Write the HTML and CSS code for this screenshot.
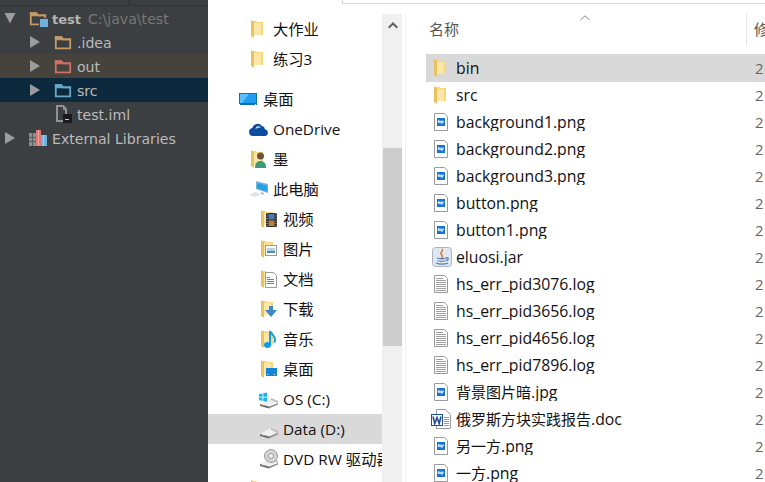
FILE: index.html
```html
<!DOCTYPE html>
<html lang="zh">
<head>
<meta charset="utf-8">
<title>test</title>
<link rel="stylesheet" href="styles.css">
</head>
<body>
<svg class="sprite" xmlns="http://www.w3.org/2000/svg">
  <symbol id="tri-r" viewBox="0 0 12 12"><path d="M1 0 11 6 1 12z"/></symbol>
  <symbol id="tri-d" viewBox="0 0 12 12"><path d="M0.500 1h11L6 11.500z"/></symbol>
  <symbol id="idea-folder" viewBox="0 0 20 16"><path fill="none" stroke="currentColor" stroke-width="2" d="M2 14.500V2h6l2 2.500h8v10z"/><path fill="currentColor" d="M2 1h6.500l2 2.500h8.500v2H1V1z"/></symbol>
  <symbol id="iml" viewBox="0 0 18 20"><path fill="none" stroke="#8f9192" stroke-width="2" d="M8 17H2V2h6l3 3v5"/><path fill="#8f9192" d="M8 1v5h4z"/><rect x="8" y="10" width="9" height="9" fill="#1b1b1b"/><rect x="10" y="15" width="4" height="1" fill="#c8c8c8"/></symbol>
  <symbol id="libs" viewBox="0 0 18 16"><rect x="0" y="3" width="7" height="13" fill="#8a8d8f"/><path d="M0 7.500h7M0 11.500h7M3.500 3v13" stroke="#5b5e60"/><rect x="7" y="0" width="5" height="16" fill="#e0736e"/><rect x="9" y="0" width="1" height="16" fill="#efa9a5"/><rect x="12" y="5" width="6" height="11" fill="#6fb0dc"/><rect x="14" y="5" width="1" height="11" fill="#a9d2ee"/></symbol>

  <symbol id="folder" viewBox="0 0 20 20"><path fill="#f7d67c" d="M2 2h5l1 1h6v13H2z"/><path fill="#fce7a9" d="M5 4h7v12H5z"/><path fill="#ecc164" d="M2 1l3 2v16l-3-2z"/></symbol>
  <symbol id="desktop" viewBox="0 0 20 20"><rect x="0" y="4" width="18" height="12" fill="#0f6fb8"/><path fill="#1f9df2" d="M1 5h16v9H1z"/><path fill="#5cc0fa" d="M1 5h9L3 14H1z"/><path fill="#fff" d="M0 15h1v1H0zM16 15h1v1h-1z"/></symbol>
  <symbol id="cloud" viewBox="0 0 20 20"><path fill="#0c4da2" d="M4 17a4 4 0 0 1-.8-7.900A5.500 5.500 0 0 1 13 7a3.800 3.800 0 0 1 3 3.200A3.500 3.500 0 0 1 16.500 17z"/><path fill="#fff" d="M6.500 9.500c1-2 3-3 5-1.500l-.5.700c-1.500-.5-3 0-4 1.300z"/></symbol>
  <symbol id="person" viewBox="0 0 20 20"><use href="#folder"/><circle cx="11.500" cy="7" r="3.500" fill="#6e5240"/><path fill="#3f9a78" d="M6 19c0-5 2-7 5.500-7s5.500 2 5.500 7z"/></symbol>
  <symbol id="pc" viewBox="0 0 20 20"><path fill="#dfe3e6" d="M0 16l6-3 6 2-6 3z"/><path fill="#7ab6dc" d="M7 2l12 3v9L7 10z"/><path fill="#28a0e6" d="M8 4l10 2.500v6L8 9.500z"/><path fill="#b9c0c6" d="M12 13l3 .8v2l-3-.8z"/></symbol>
  <symbol id="video" viewBox="0 0 20 20"><use href="#folder"/><rect x="7" y="4" width="11" height="14" fill="#2c2c2c"/><rect x="9.500" y="5" width="6" height="5.500" fill="#4a7cb8"/><rect x="9.500" y="11.500" width="6" height="5.500" fill="#b9803a"/><path stroke="#ccc" stroke-dasharray="1 1.500" d="M8 4v14M17 4v14"/></symbol>
  <symbol id="pic" viewBox="0 0 20 20"><use href="#folder"/><rect x="6.500" y="6.500" width="11" height="10" fill="#fff" stroke="#9b9b9b"/><rect x="8" y="9" width="8" height="5" fill="#b9d3e6"/><rect x="8" y="12" width="8" height="2" fill="#4b8e90"/></symbol>
  <symbol id="docs" viewBox="0 0 20 20"><use href="#folder"/><path fill="#fff" stroke="#9b9b9b" d="M6.500 3.500h8l3 3v12h-11z"/><path stroke="#2f8fd8" d="M8 8.500h3M8 10.500h7M8 12.500h7M8 14.500h7"/></symbol>
  <symbol id="down" viewBox="0 0 20 20"><use href="#folder"/><path fill="#3a87d0" d="M10 7h4v4h4l-6 7-6-7h4z"/></symbol>
  <symbol id="music" viewBox="0 0 20 20"><use href="#folder"/><path fill="none" stroke="#109be6" stroke-width="2" d="M11 16V2c1 3 5 4 5 9 0 1-.5 2-1 2.500"/><ellipse cx="8.500" cy="16" rx="3.500" ry="3" fill="#109be6"/></symbol>
  <symbol id="desk2" viewBox="0 0 20 20"><use href="#folder"/><rect x="7" y="9" width="11" height="8" fill="#1785d8"/><path fill="#fff" d="M8 15h1v1H8zM15 15h1v1h-1z"/></symbol>
  <symbol id="drive" viewBox="0 0 20 20"><path fill="#f0f0f0" d="M1 15l11-6 7 3-9 5z"/><path fill="#bdbdbd" d="M12 9l7 3v2l-7-3z"/><path fill="#6a6a6a" d="M1 15l9 2.500v2L1 17z"/><path fill="#8f8f8f" d="M10 17.500l9-3.500v1.500l-9 4z"/><path fill="#3fbf5f" d="M3 16h2v1H3z"/></symbol>
  <symbol id="drive-os" viewBox="0 0 20 20"><use href="#drive"/><path fill="#18b4ec" d="M0 5l3.500-.6v3.300H0zM4.300 4.200L8 3.500v4.200H4.300zM0 8.500h3.500v3.300L0 11.200zM4.300 8.500H8v4.200l-3.700-.7z"/></symbol>
  <symbol id="dvd" viewBox="0 0 20 20"><use href="#drive"/><circle cx="12" cy="7" r="6.500" fill="#d4d4d4" stroke="#9a9a9a"/><circle cx="12" cy="7" r="2.500" fill="#f4f4f4" stroke="#9a9a9a"/></symbol>

  <symbol id="png" viewBox="0 0 20 20"><path fill="#fff" stroke="#9a9a9a" d="M2.500 1.500h10l3 3v14h-13z"/><rect x="5" y="6" width="8" height="8" fill="#1473d4"/><path fill="#cfe6fa" d="M5.500 9.500l1.500-2 1 2 1-1.500 1 1.500 1-1.500 1 2-1 .5-1 2-1-2-1 1-1-1-1 .5z"/></symbol>
  <symbol id="log" viewBox="0 0 20 20"><path fill="#fff" stroke="#9a9a9a" d="M2.500 1.500h10l3 3v14h-13z"/><path stroke="#a0a0a0" d="M4 4.500h7M4 6.500h10M4 8.500h10M4 10.500h10M4 12.500h10M4 14.500h10M4 16.500h10"/></symbol>
  <symbol id="jar" viewBox="0 0 20 20"><rect x="0.500" y="0.500" width="19" height="19" rx="3" fill="#dfe8f2" stroke="#a9b4c0"/><path fill="none" stroke="#e0742a" stroke-width="1.500" d="M10 2c2 2-2 3-1 5s2 1.500 1 4"/><path fill="none" stroke="#5b7fa8" stroke-width="1.300" d="M5 11c2 1 7 1 9 0M5.500 13.500c2 1 6 1 8 0M4 16c3 1.500 9 1.500 12 0M14 11c3-1 3 2 0 2.500"/></symbol>
  <symbol id="doc" viewBox="0 0 22 22"><path fill="#fff" stroke="#9a9a9a" d="M6.500 1.500h9l5 5v14h-14z"/><path stroke="#9a9a9a" d="M14 9.500h5M14 11.500h5M14 13.500h5M14 15.500h5M14 17.500h5"/><rect x="1" y="6" width="12" height="12" fill="#1f4e96"/><rect x="2" y="7" width="10" height="10" fill="#fff"/><path fill="none" stroke="#1f4e96" stroke-width="1.600" d="M3 8.500l1.800 7 2.200-6 2.200 6 1.800-7"/></symbol>
  <symbol id="caret" viewBox="0 0 10 6"><path fill="none" stroke="#8a8a8a" d="M.5 5 5 .8 9.500 5"/></symbol>
  <symbol id="chev" viewBox="0 0 10 7"><path fill="none" stroke="#606060" stroke-width="2" d="M.7 5.800 5 1.500l4.300 4.300"/></symbol>
</svg>

<aside class="ide">
  <div class="ide-top"><span class="ide-tab"></span></div>
  <div class="tree-row">
    <svg class="tri tri-root"><use href="#tri-d"/></svg>
    <span class="project-icon"><svg class="tree-folder tan"><use href="#idea-folder"/></svg><span class="project-badge"></span></span>
    <span class="tree-label"><b>test</b><span class="path">C:\java\test</span></span>
  </div>
  <div class="tree-row">
    <svg class="tri tri-child"><use href="#tri-r"/></svg>
    <svg class="tree-folder tan"><use href="#idea-folder"/></svg>
    <span class="tree-label">.idea</span>
  </div>
  <div class="tree-row tree-out">
    <svg class="tri tri-child"><use href="#tri-r"/></svg>
    <svg class="tree-folder red"><use href="#idea-folder"/></svg>
    <span class="tree-label">out</span>
  </div>
  <div class="tree-row tree-sel">
    <svg class="tri tri-child"><use href="#tri-r"/></svg>
    <svg class="tree-folder blue"><use href="#idea-folder"/></svg>
    <span class="tree-label">src</span>
  </div>
  <div class="tree-row tree-leaf">
    <svg class="iml-icon"><use href="#iml"/></svg>
    <span class="tree-label">test.iml</span>
  </div>
  <div class="tree-row">
    <svg class="tri tri-ext"><use href="#tri-r"/></svg>
    <svg class="libs-icon"><use href="#libs"/></svg>
    <span class="tree-label">External Libraries</span>
  </div>
</aside>

<div class="explorer">
  <div class="topbar"><div class="addr"></div></div>
  <div class="panes">
    <nav class="nav">
      <div class="nav-row l1"><svg class="ico"><use href="#folder"/></svg>大作业</div>
      <div class="nav-row l1"><svg class="ico"><use href="#folder"/></svg>练习3</div>
      <div class="nav-gap"></div>
      <div class="nav-row l0"><svg class="ico"><use href="#desktop"/></svg>桌面</div>
      <div class="nav-row l1"><svg class="ico"><use href="#cloud"/></svg>OneDrive</div>
      <div class="nav-row l1"><svg class="ico"><use href="#person"/></svg>墨</div>
      <div class="nav-row l1"><svg class="ico"><use href="#pc"/></svg>此电脑</div>
      <div class="nav-row l2"><svg class="ico"><use href="#video"/></svg>视频</div>
      <div class="nav-row l2"><svg class="ico"><use href="#pic"/></svg>图片</div>
      <div class="nav-row l2"><svg class="ico"><use href="#docs"/></svg>文档</div>
      <div class="nav-row l2"><svg class="ico"><use href="#down"/></svg>下载</div>
      <div class="nav-row l2"><svg class="ico"><use href="#music"/></svg>音乐</div>
      <div class="nav-row l2"><svg class="ico"><use href="#desk2"/></svg>桌面</div>
      <div class="nav-row l2"><svg class="ico"><use href="#drive-os"/></svg>OS (C:)</div>
      <div class="nav-row l2 nav-sel"><svg class="ico"><use href="#drive"/></svg>Data (D:)</div>
      <div class="nav-row l2"><svg class="ico"><use href="#dvd"/></svg>DVD RW 驱动器</div>
      <div class="nav-row l1"><svg class="ico"><use href="#folder"/></svg></div>
    </nav>
    <div class="scrollbar">
      <div class="scroll-up"><svg class="chev"><use href="#chev"/></svg></div>
      <div class="scroll-thumb"></div>
    </div>
    <main class="files">
      <div class="file-head">
        <span class="col-name">名称<svg class="caret"><use href="#caret"/></svg></span>
        <span class="col-date">修改日期</span>
      </div>
      <div class="file-row file-sel"><svg class="ico"><use href="#folder"/></svg><span class="fname">bin</span><span class="fdate">2017/5/2</span></div>
      <div class="file-row"><svg class="ico"><use href="#folder"/></svg><span class="fname">src</span><span class="fdate">2017/5/2</span></div>
      <div class="file-row"><svg class="ico"><use href="#png"/></svg><span class="fname">background1.png</span><span class="fdate">2017/5/2</span></div>
      <div class="file-row"><svg class="ico"><use href="#png"/></svg><span class="fname">background2.png</span><span class="fdate">2017/5/2</span></div>
      <div class="file-row"><svg class="ico"><use href="#png"/></svg><span class="fname">background3.png</span><span class="fdate">2017/5/2</span></div>
      <div class="file-row"><svg class="ico"><use href="#png"/></svg><span class="fname">button.png</span><span class="fdate">2017/5/2</span></div>
      <div class="file-row"><svg class="ico"><use href="#png"/></svg><span class="fname">button1.png</span><span class="fdate">2017/5/2</span></div>
      <div class="file-row"><svg class="ico"><use href="#jar"/></svg><span class="fname">eluosi.jar</span><span class="fdate">2017/5/2</span></div>
      <div class="file-row"><svg class="ico"><use href="#log"/></svg><span class="fname">hs_err_pid3076.log</span><span class="fdate">2017/5/2</span></div>
      <div class="file-row"><svg class="ico"><use href="#log"/></svg><span class="fname">hs_err_pid3656.log</span><span class="fdate">2017/5/2</span></div>
      <div class="file-row"><svg class="ico"><use href="#log"/></svg><span class="fname">hs_err_pid4656.log</span><span class="fdate">2017/5/2</span></div>
      <div class="file-row"><svg class="ico"><use href="#log"/></svg><span class="fname">hs_err_pid7896.log</span><span class="fdate">2017/5/2</span></div>
      <div class="file-row"><svg class="ico"><use href="#png"/></svg><span class="fname"><span class="cjk">背景图片暗</span>.jpg</span><span class="fdate">2017/5/2</span></div>
      <div class="file-row"><svg class="ico ico-doc"><use href="#doc"/></svg><span class="fname"><span class="cjk">俄罗斯方块实践报告</span>.doc</span><span class="fdate">2017/5/2</span></div>
      <div class="file-row"><svg class="ico"><use href="#png"/></svg><span class="fname"><span class="cjk">另一方</span>.png</span><span class="fdate">2017/5/2</span></div>
      <div class="file-row"><svg class="ico"><use href="#png"/></svg><span class="fname"><span class="cjk">一方</span>.png</span><span class="fdate">2017/5/2</span></div>
    </main>
  </div>
</div>
</body>
</html>
```
FILE: styles.css
```css
* { box-sizing: border-box; }
html, body { margin: 0; height: 100%; }
body {
  display: flex;
  width: 765px;
  height: 482px;
  overflow: hidden;
  background: #fff;
}
.sprite { display: none; }

/* IDE project tree */
.ide {
  flex: 0 0 208px;
  background: #3c3f41;
  color: #bbbbbb;
  font: 14.1px/24px "DejaVu Sans", sans-serif;
}
.ide-top {
  height: 6px;
  background: #3c3f41;
  border-bottom: 1px solid #323437;
}
.ide-tab {
  display: block;
  width: 130px;
  height: 5px;
  border-right: 1px solid #2b2d2e;
}
.tree-row {
  display: flex;
  align-items: center;
  height: 24px;
  white-space: nowrap;
}
.tree-out { background: #45433c; }
.tree-sel { background: #0d293e; }
.tree-leaf { padding-left: 55px; }
.tree-label { padding-top: 2px; }
.tree-label b { font-size: 13px; font-weight: 700; color: #b4b4b4; }
.path { margin-left: 7px; color: #787878; }
.tri { fill: #9a9c9e; width: 12px; height: 12px; flex: none; }
.tri-root { margin: 0 13px 0 4px; }
.tri-child { margin: 0 13px 0 29px; }
.tri-ext { margin: 0 13px 0 4px; }
.tree-folder { width: 18px; height: 15px; flex: none; margin-right: 5px; }
.tan { color: #c59a66; }
.red { color: #cf6f69; }
.blue { color: #66a7cc; }
.project-icon { display: flex; position: relative; width: 19px; margin-right: 4px; }
.project-badge {
  position: absolute;
  right: 0;
  bottom: -1px;
  width: 8px;
  height: 8px;
  background: #6fb0dc;
  outline: 1px solid #3c3f41;
}
.project-icon .tree-folder { margin-right: 0; }
.iml-icon { width: 18px; height: 20px; flex: none; margin-right: 4px; }
.libs-icon { width: 18px; height: 16px; flex: none; margin-right: 5px; }

/* Explorer window */
.explorer {
  flex: 1;
  min-width: 0;
  display: flex;
  flex-direction: column;
  font: 15px/1.2 "Open Sans", "Noto Sans CJK SC", sans-serif;
  color: #111;
}
.topbar { flex: 0 0 14px; padding-left: 134px; }
.addr {
  height: 4px;
  border-left: 1px solid #d9d9d9;
  border-bottom: 1px solid #d9d9d9;
}
.panes { flex: 1; display: flex; min-height: 0; }

.nav { flex: 0 0 174px; overflow: hidden; font-size: 15.3px; }
.nav-row {
  display: flex;
  align-items: center;
  height: 30px;
  white-space: nowrap;
}
.nav-gap { height: 10px; }
.l0 { padding-left: 31px; }
.l1 { padding-left: 41px; }
.l2 { padding-left: 51px; }
.nav-sel { background: #d9d9d9; }
.ico { width: 20px; height: 20px; flex: none; margin-right: 4px; }

.scrollbar {
  flex: 0 0 20px;
  margin-right: 3px;
  background: #f0f0f0;
  display: flex;
  flex-direction: column;
}
.scroll-up {
  height: 134px;
  display: flex;
  justify-content: center;
  padding-top: 8px;
  padding-left: 1px;
}
.chev { width: 10px; height: 7px; }
.scroll-thumb { height: 198px; margin-left: 1px; background: #cdcdcd; }

.files {
  flex: 1;
  min-width: 0;
  border-left: 1px solid #f2f2f2;
  padding-left: 20px;
  overflow: hidden;
}
.file-head {
  display: flex;
  height: 40px;
  color: #555;
  white-space: nowrap;
}
.col-name {
  position: relative;
  flex: 0 0 321px;
  height: 32px;
  padding: 6px 0 0 3px;
  border-right: 1px solid #e5e5e5;
}
.caret {
  position: absolute;
  left: 154px;
  top: 1px;
  width: 10px;
  height: 6px;
}
.col-date { flex: 1; overflow: hidden; padding: 6px 0 0 7px; width: 10px; }
.file-row {
  display: flex;
  align-items: center;
  height: 27px;
  padding: 0 0 1px 6px;
  white-space: nowrap;
}
.file-sel { height: 28px; padding-bottom: 0; background: #d9d9d9; }
.fname { flex: 0 0 299px; overflow: hidden; font-size: 15.8px; }
.cjk { font-size: 15px; }
.fdate { flex: 1; min-width: 0; overflow: hidden; color: #666; letter-spacing: 1px; }
.ico-doc { margin-left: -2px; margin-right: 4px; width: 22px; height: 22px; }
```
